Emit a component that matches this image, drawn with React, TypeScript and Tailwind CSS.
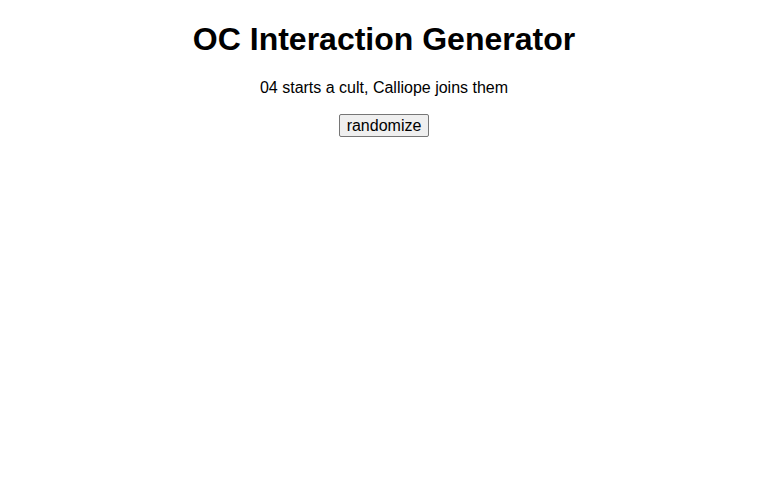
import React, { useState } from "react";

const prompts = [
  "04 starts a cult, Calliope joins them",
];

export default function App() {
  const [text, setText] = useState(prompts[0]);
  return (
    <div
      className="min-h-[480px] bg-white text-center text-black"
      style={{ fontFamily: '"Liberation Sans", Arial, sans-serif' }}
    >
      <div className="pt-[21px]">
        <h1 className="text-[32px] font-bold leading-[37px]">OC Interaction Generator</h1>
        <p className="mt-[21px] text-[16px] leading-[18px]">{text}</p>
        <button
          className="mt-[17px] rounded-[2px] border border-[#767676] bg-[#efefef] px-[7px] py-[1px] text-[16px] leading-[19px] text-black"
          onClick={() => setText(prompts[Math.floor(Math.random() * prompts.length)])}
        >
          randomize
        </button>
      </div>
    </div>
  );
}
